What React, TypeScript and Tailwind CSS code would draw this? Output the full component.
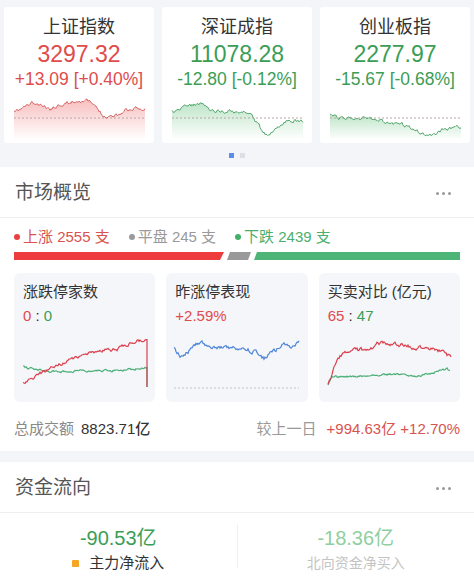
import React from 'react';

type Pt = [number, number];

// seeded random walk between key points
function walk(keys: Pt[], seed: number, noise: number, step = 1): Pt[] {
  let s = seed;
  const rand = () => {
    s = (s * 16807) % 2147483647;
    return s / 2147483647;
  };
  const pts: Pt[] = [];
  const x0 = keys[0][0];
  const x1 = keys[keys.length - 1][0];
  let e = 0;
  let k = 0;
  for (let x = x0; x <= x1 + 0.001; x += step) {
    while (k < keys.length - 2 && x > keys[k + 1][0]) k++;
    const [ax, ay] = keys[k];
    const [bx, by] = keys[k + 1];
    const y = ay + (by - ay) * ((x - ax) / (bx - ax));
    e = e * 0.55 + (rand() - 0.5) * noise;
    pts.push([x, y + e]);
  }
  return pts;
}

const toLine = (pts: Pt[]) => pts.map(([x, y]) => `${x.toFixed(1)},${y.toFixed(1)}`).join(' ');

const tx = (t: number) => 10 + t * 131;

interface IndexCard {
  name: string;
  value: string;
  change: string;
  up: boolean;
  keys: Pt[];
  seed: number;
}

const indices: IndexCard[] = [
  {
    name: '上证指数',
    value: '3297.32',
    change: '+13.09 [+0.40%]',
    up: true,
    seed: 11,
    keys: [
      [tx(0), 23], [tx(0.137), 13], [tx(0.275), 19], [tx(0.36), 14], [tx(0.52), 10],
      [tx(0.58), 12], [tx(0.7), 27], [tx(0.81), 24], [tx(0.85), 20], [tx(1), 19],
    ],
  },
  {
    name: '深证成指',
    value: '11078.28',
    change: '-12.80 [-0.12%]',
    up: false,
    seed: 29,
    keys: [
      [tx(0), 22], [tx(0.21), 13], [tx(0.3), 20], [tx(0.5), 22], [tx(0.6), 25],
      [tx(0.72), 45], [tx(0.76), 43], [tx(0.83), 35], [tx(0.88), 31], [tx(1), 31],
    ],
  },
  {
    name: '创业板指',
    value: '2277.97',
    change: '-15.67 [-0.68%]',
    up: false,
    seed: 47,
    keys: [
      [tx(0), 26], [tx(0.15), 29], [tx(0.25), 27], [tx(0.45), 32], [tx(0.6), 36],
      [tx(0.73), 45], [tx(0.8), 44], [tx(0.87), 39], [tx(1), 37],
    ],
  },
];

function Sparkline({ card, id }: { card: IndexCard; id: string }) {
  const pts = walk(card.keys, card.seed, 3.2);
  const line = toLine(pts);
  const area = `${line} ${pts[pts.length - 1][0].toFixed(1)},50 ${pts[0][0].toFixed(1)},50`;
  const stroke = card.up ? '#d96a6a' : '#5aa872';
  const fill = card.up ? '#f5a9a9' : '#a8dcb5';
  return (
    <svg width={150} height={53} className="block">
      <defs>
        <linearGradient id={id} x1="0" y1="0" x2="0" y2="1">
          <stop offset="0" stopColor={fill} stopOpacity="0.75" />
          <stop offset="1" stopColor={fill} stopOpacity="0" />
        </linearGradient>
      </defs>
      <polygon points={area} fill={`url(#${id})`} />
      <line x1={10} y1={28} x2={141} y2={28} stroke="#b9a5a5" strokeWidth={1} strokeDasharray="2 2" />
      <polyline points={line} fill="none" stroke={stroke} strokeWidth={1} />
    </svg>
  );
}

function Dots() {
  return (
    <div className="flex items-center gap-[3px]">
      <span className="w-[3px] h-[3px] rounded-full bg-[#999]" />
      <span className="w-[3px] h-[3px] rounded-full bg-[#999]" />
      <span className="w-[3px] h-[3px] rounded-full bg-[#999]" />
    </div>
  );
}

function SectionHeader({ title }: { title: string }) {
  return (
    <div className="h-[51px] pt-[3px] flex items-center justify-between pl-[15px] pr-[23px] border-b border-[#eeeff2]">
      <span className="text-[19px] text-[#555]">{title}</span>
      <Dots />
    </div>
  );
}

function LimitChart() {
  const red = walk([[9, 58], [29, 46], [53, 35], [76, 26], [103, 23], [123, 15], [133, 16]], 5, 3);
  const green = walk([[9, 41], [29, 45], [70, 45], [110, 44], [133, 42]], 9, 2);
  red.push([133, 61]);
  green.push([133, 61]);
  return (
    <svg width={141} height={76} className="block">
      <polyline points={toLine(green)} fill="none" stroke="#4caf78" strokeWidth={1.2} />
      <polyline points={toLine(red)} fill="none" stroke="#d9414f" strokeWidth={1.2} />
    </svg>
  );
}

function YesterdayChart() {
  const blue = walk(
    [[8, 23], [14, 30], [22, 26], [34, 16], [50, 22], [75, 23], [90, 26], [98, 32], [110, 24], [118, 18], [126, 22], [133, 17]],
    17,
    3.4,
  );
  return (
    <svg width={141} height={76} className="block">
      <line x1={8} y1={62} x2={133} y2={62} stroke="#c4c4c4" strokeWidth={1} strokeDasharray="2 2" />
      <polyline points={toLine(blue)} fill="none" stroke="#4f86d8" strokeWidth={1.2} />
    </svg>
  );
}

function BuySellChart() {
  const red = walk(
    [[9, 60], [12, 53], [19, 31], [30, 25], [50, 23], [62, 16], [85, 20], [110, 23], [126, 25], [132, 32]],
    23,
    3.6,
  );
  const green = walk([[9, 60], [13, 51], [50, 50], [80, 48], [99, 50], [128, 43], [131, 45]], 31, 1.8);
  return (
    <svg width={141} height={76} className="block">
      <polyline points={toLine(green)} fill="none" stroke="#4caf78" strokeWidth={1.2} />
      <polyline points={toLine(red)} fill="none" stroke="#d9414f" strokeWidth={1.2} />
    </svg>
  );
}

export default function App() {
  return (
    <div className="w-[474px] h-[579px] overflow-hidden bg-white font-['Liberation_Sans','Noto_Sans_CJK_SC',sans-serif]">
      {/* index cards */}
      <div className="bg-[#f4f5f9] pl-1 pr-1 pt-[7px]">
        <div className="grid grid-cols-3 gap-2">
          {indices.map((c, i) => (
            <div key={c.name} className="bg-white h-[136px] rounded-[3px] pt-[9px] overflow-hidden">
              <div className="text-center text-[18px] leading-[22px] text-[#333]">{c.name}</div>
              <div
                className={`mt-[2px] text-center text-[23px] leading-[28px] ${c.up ? 'text-[#e04b4b]' : 'text-[#3b9d56]'}`}
              >
                {c.value}
              </div>
              <div
                className={`text-center text-[17.5px] leading-[22px] ${c.up ? 'text-[#e04b4b]' : 'text-[#3b9d56]'}`}
              >
                {c.change}
              </div>
              <Sparkline card={c} id={`g${i}`} />
            </div>
          ))}
        </div>
        <div className="h-6 flex items-center justify-center gap-[6px]">
          <span className="w-[5px] h-[5px] bg-[#5b8def]" />
          <span className="w-[5px] h-[5px] bg-[#dcdfe6]" />
        </div>
      </div>

      {/* market overview */}
      <SectionHeader title="市场概览" />
      <div className="px-[14px] pt-[9px]">
        <div className="flex items-center h-[20px] text-[15px] leading-[20px]">
          <span className="w-[6px] h-[6px] rounded-full bg-[#e8403f] mr-[3px]" />
          <span className="text-[#d9534f]">上涨 2555 支</span>
          <span className="w-[6px] h-[6px] rounded-full bg-[#9a9a9a] ml-[19px] mr-[3px]" />
          <span className="text-[#9a9a9a]">平盘 245 支</span>
          <span className="w-[6px] h-[6px] rounded-full bg-[#42b06a] ml-[19px] mr-[3px]" />
          <span className="text-[#4caf6e]">下跌 2439 支</span>
        </div>
        <svg width={446} height={8} className="block mt-[5px]">
          <polygon points="0,0 210,0 206,8 0,8" fill="#ee3b3b" />
          <polygon points="216,0 237,0 234,8 213,8" fill="#999999" />
          <polygon points="243,0 446,0 446,8 240,8" fill="#4db575" />
        </svg>
        <div className="grid grid-cols-3 gap-[11px] mt-[13px]">
          <div className="bg-[#f5f6f9] rounded-md h-[129px] pt-[9px] overflow-hidden">
            <div className="px-[9px] text-[15px] leading-[20px] text-[#333]">涨跌停家数</div>
            <div className="px-[9px] mt-[4px] text-[15px] leading-[20px]">
              <span className="text-[#e04b4b]">0</span>
              <span className="text-[#333]"> : </span>
              <span className="text-[#3b9d56]">0</span>
            </div>
            <LimitChart />
          </div>
          <div className="bg-[#f5f6f9] rounded-md h-[129px] pt-[9px] overflow-hidden">
            <div className="px-[9px] text-[15px] leading-[20px] text-[#333]">昨涨停表现</div>
            <div className="px-[9px] mt-[4px] text-[15px] leading-[20px] text-[#e04b4b]">+2.59%</div>
            <YesterdayChart />
          </div>
          <div className="bg-[#f5f6f9] rounded-md h-[129px] pt-[9px] overflow-hidden">
            <div className="px-[9px] text-[15px] leading-[20px] text-[#333]">买卖对比 (亿元)</div>
            <div className="px-[9px] mt-[4px] text-[15px] leading-[20px]">
              <span className="text-[#e04b4b]">65</span>
              <span className="text-[#333]"> : </span>
              <span className="text-[#3b9d56]">47</span>
            </div>
            <BuySellChart />
          </div>
        </div>
        <div className="flex items-center justify-between h-[20px] mt-[17px] mb-[12px] text-[15px] leading-[20px]">
          <div>
            <span className="text-[#8a8a8a]">总成交额</span>
            <span className="ml-[7px] text-[#333] font-medium">8823.71亿</span>
          </div>
          <div>
            <span className="text-[#999]">较上一日</span>
            <span className="ml-[10px] text-[#d9534f]">+994.63亿 +12.70%</span>
          </div>
        </div>
      </div>

      {/* fund flow */}
      <div className="h-[11px] bg-[#f4f5f9]" />
      <SectionHeader title="资金流向" />
      <div className="flex pt-[13px]">
        <div className="flex-1 flex flex-col items-center">
          <div className="text-[20px] leading-[24px] text-[#3b9d56]">-90.53亿</div>
          <div className="flex items-center mt-[2px] text-[15px] leading-[22px] text-[#333]">
            <span className="w-[7px] h-[7px] rounded-[1px] bg-[#f5a623] mr-[10px]" />
            主力净流入
          </div>
        </div>
        <div className="w-px h-[44px] mt-[-2px] bg-[#f0f0f2]" />
        <div className="flex-1 flex flex-col items-center">
          <div className="text-[20px] leading-[24px] text-[#8fcfa0]">-18.36亿</div>
          <div className="mt-[2px] text-[14px] leading-[22px] text-[#c4c4c4]">北向资金净买入</div>
        </div>
      </div>
    </div>
  );
}
